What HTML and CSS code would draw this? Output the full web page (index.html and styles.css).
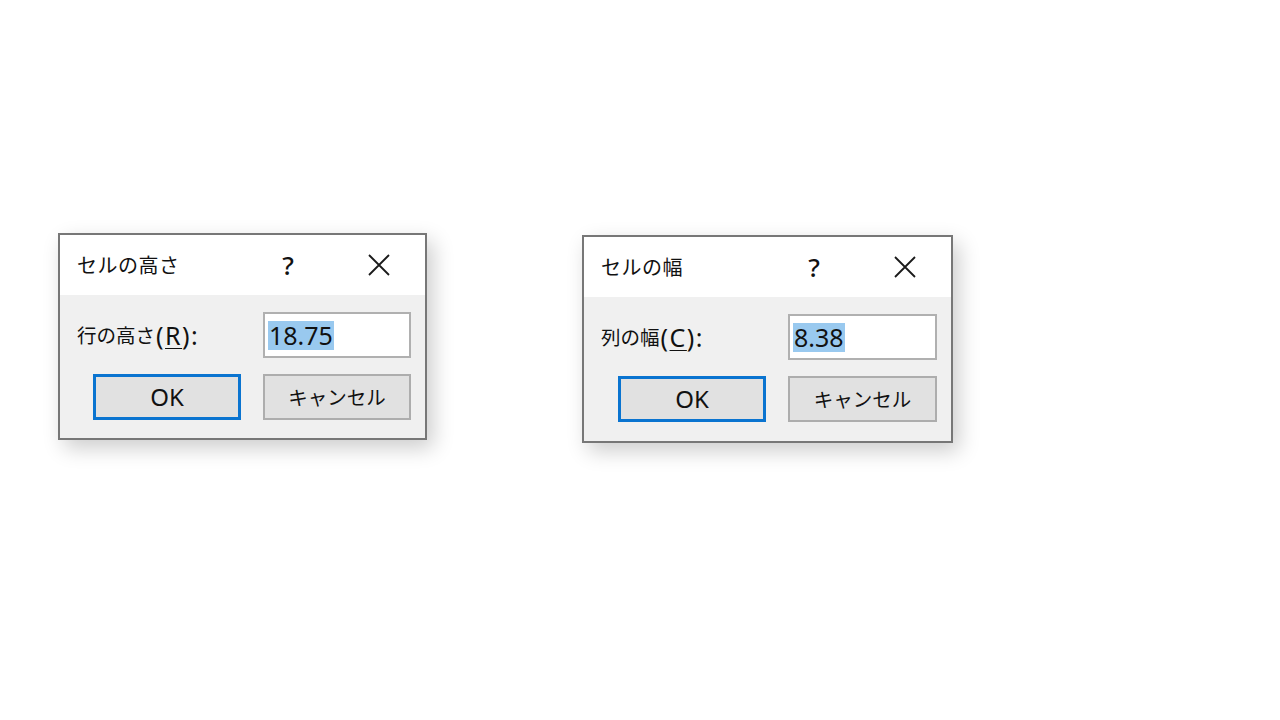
FILE: index.html
```html
<!DOCTYPE html>
<html lang="ja">
<head>
<meta charset="utf-8">
<title>セルの高さ / セルの幅</title>
<link rel="stylesheet" href="styles.css">
</head>
<body>
<main class="stage">
  <section class="dialog">
    <header class="titlebar">
      <span class="title">セルの高さ</span>
      <span class="help">?</span>
      <span class="close">
        <svg width="22" height="22" viewBox="0 0 22 22"><path d="M1 1 L21 21 M21 1 L1 21" stroke="#1a1a1a" stroke-width="1.8" fill="none"/></svg>
      </span>
    </header>
    <div class="body">
      <div class="field-row">
        <label class="label">行の高さ<span class="key">(<u>R</u>):</span></label>
        <div class="input"><span class="sel">18.75</span></div>
      </div>
      <div class="button-row">
        <div class="btn btn-default">OK</div>
        <div class="btn">キャンセル</div>
      </div>
    </div>
  </section>

  <section class="dialog dialog-wide">
    <header class="titlebar">
      <span class="title">セルの幅</span>
      <span class="help">?</span>
      <span class="close">
        <svg width="22" height="22" viewBox="0 0 22 22"><path d="M1 1 L21 21 M21 1 L1 21" stroke="#1a1a1a" stroke-width="1.8" fill="none"/></svg>
      </span>
    </header>
    <div class="body">
      <div class="field-row">
        <label class="label">列の幅<span class="key">(<u>C</u>):</span></label>
        <div class="input"><span class="sel">8.38</span></div>
      </div>
      <div class="button-row">
        <div class="btn btn-default">OK</div>
        <div class="btn">キャンセル</div>
      </div>
    </div>
  </section>
</main>
</body>
</html>
```

FILE: styles.css
```css
* { box-sizing: border-box; }

html, body {
  margin: 0;
  background: #ffffff;
}

body {
  width: 1280px;
  height: 720px;
  overflow: hidden;
  font-family: "Noto Sans CJK JP", "Noto Sans", sans-serif;
  color: #111111;
}

.stage {
  display: flex;
  align-items: flex-start;
  gap: 155px;
  padding: 233px 0 0 58px;
}

.dialog {
  width: 369px;
  height: 207px;
  border: 2px solid #777777;
  background: #f0f0f0;
  display: flex;
  flex-direction: column;
  box-shadow: 6px 8px 20px rgba(0, 0, 0, 0.2);
}

.dialog-wide {
  width: 371px;
  height: 208px;
  margin-top: 2px;
}

.titlebar {
  height: 60px;
  background: #ffffff;
  display: flex;
  align-items: center;
  padding: 0 23px 0 17px;
}

.title {
  flex: 1;
  font-size: 20px;
  line-height: 1;
  letter-spacing: 0.5px;
}

.help {
  width: 46px;
  text-align: center;
  font-family: "Noto Sans", "DejaVu Sans", sans-serif;
  font-size: 26px;
  font-weight: 500;
  line-height: 1;
}

.close {
  width: 46px;
  margin-left: 45px;
  display: flex;
  justify-content: center;
  align-items: center;
}

.body {
  flex: 1;
  display: flex;
  flex-direction: column;
  gap: 16px;
  padding: 17px 14px 0 17px;
}

.field-row {
  display: flex;
  align-items: center;
  justify-content: space-between;
}

.label {
  font-size: 19.5px;
  line-height: 1;
  display: flex;
  align-items: center;
}

.key {
  font-family: "Noto Sans", "DejaVu Sans", sans-serif;
  font-size: 25px;
  letter-spacing: 1.5px;
  margin-left: 1px;
}

.key u {
  text-underline-offset: 3px;
  text-decoration-thickness: 1px;
}

.input {
  width: 148px;
  height: 46px;
  background: #ffffff;
  border: 2px solid #b0b0b0;
  display: flex;
  align-items: center;
  padding-left: 3px;
}

.dialog-wide .input {
  width: 149px;
}

.sel {
  background: #99c9ef;
  font-family: "Noto Sans", "DejaVu Sans", sans-serif;
  font-size: 25px;
  line-height: 29px;
  padding: 0 1px;
  color: #111111;
}

.button-row {
  display: flex;
  justify-content: flex-end;
  gap: 22px;
}

.btn {
  width: 148px;
  height: 46px;
  background: #e1e1e1;
  border: 2px solid #adadad;
  display: flex;
  align-items: center;
  justify-content: center;
  font-size: 19.5px;
  line-height: 1;
}

.dialog-wide .btn:last-child {
  width: 149px;
}

.btn-default {
  border: 3px solid #0a74d0;
  font-family: "Noto Sans", "DejaVu Sans", sans-serif;
  font-size: 24px;
}
```
